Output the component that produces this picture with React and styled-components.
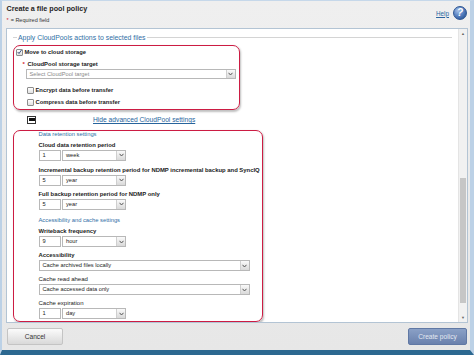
import styled, { createGlobalStyle } from "styled-components";

const GlobalStyle = createGlobalStyle`
  html, body { margin: 0; padding: 0; }
  body { font-family: "Liberation Sans", Arial, sans-serif; background: #fff; }
  * { box-sizing: border-box; }
`;

const Dialog = styled.div`
  width: 474px;
  height: 355px;
  display: flex;
  flex-direction: column;
  background: linear-gradient(#efefef, #e7e7e7);
  border-top: 1px solid #c6d8ea;
  border-left: 2px solid #bcd1e6;
  border-right: 4px solid #bcd1e6;
  border-bottom: 5px solid #2c6890;
  overflow: hidden;
  color: #222;
`;

const Header = styled.div`
  display: flex;
  justify-content: space-between;
  height: 27px;
  padding: 3px 3px 0 4.5px;
`;

const Title = styled.div`
  font-size: 7.2px;
  font-weight: bold;
  line-height: 9px;
  color: #1e1e1e;
`;

const Required = styled.div`
  font-size: 5.5px;
  line-height: 7px;
  margin-top: 4px;
  color: #333;
`;

const Star = styled.span`
  color: #d2232a;
  margin-right: ${(p) => p.gap || "1px"};
`;

const HelpArea = styled.div`
  display: flex;
  align-items: center;
  gap: 4px;
  height: 14px;
  margin-top: 2px;
`;

const HelpLink = styled.a`
  font-size: 6.3px;
  color: #2a64a0;
  text-decoration: underline;
`;

const HelpIcon = styled.div`
  width: 14px;
  height: 14px;
  border-radius: 50%;
  border: 1px solid #2d5592;
  background: radial-gradient(circle at 35% 30%, #a8c2e8, #5a83c2 45%, #2f5a9c 80%);
  color: #fff;
  font-size: 10px;
  font-weight: bold;
  font-style: italic;
  line-height: 12px;
  text-align: center;
`;

const Panel = styled.div`
  margin: 0 2px 0 4px;
  height: 295px;
  display: flex;
  background: #fff;
  border: 1px solid #b3c4d4;
`;

const Content = styled.div`
  flex: 1;
  overflow: hidden;
  padding: 0 6px;
`;

const ScrollBar = styled.div`
  width: 9px;
  display: flex;
  flex-direction: column;
  background: #f1f1f1;
  border-left: 1px solid #e4e4e4;
`;

const ScrollArrow = styled.div`
  height: 9px;
  display: flex;
  align-items: center;
  justify-content: center;
  font-size: 4px;
  color: #666;
`;

const ScrollTrack = styled.div`
  flex: 1;
  padding: 0 1px;
`;

const Thumb = styled.div`
  margin-top: 140px;
  height: 125px;
  background: #c6c6c6;
`;

const LegendRow = styled.div`
  display: flex;
  align-items: center;
  height: 9px;
  margin-top: 3.5px;
`;

const Rule = styled.div`
  height: 1px;
  background: #d4d4d4;
  width: ${(p) => p.w || "auto"};
  flex: ${(p) => (p.w ? "none" : 1)};
`;

const Legend = styled.span`
  font-size: 6.9px;
  color: #2f6ea5;
  padding: 0 1px;
  white-space: nowrap;
`;

const RedBox = styled.div`
  width: ${(p) => p.w}px;
  height: ${(p) => p.h}px;
  margin-top: ${(p) => p.mt}px;
  padding-left: ${(p) => p.pl || 0}px;
  border: 1.6px solid #cc1c43;
  border-radius: 7px;
  box-shadow: 1px 1.5px 2px rgba(0, 0, 0, 0.25);
`;

const CheckRow = styled.div`
  display: flex;
  align-items: center;
  gap: 2px;
  height: 9px;
  margin: ${(p) => p.m};
  font-size: 5.8px;
  font-weight: bold;
`;

const Box = styled.div`
  width: 7px;
  height: 7px;
  border: 1px solid #8d8d8d;
  border-radius: 1px;
  background: linear-gradient(#ffffff, #e0e0e0);
  display: flex;
  align-items: center;
  justify-content: center;
`;

const FieldLabel = styled.div`
  height: 8px;
  line-height: 8px;
  font-size: ${(p) => (p.light ? "6px" : "5.9px")};
  font-weight: ${(p) => (p.light ? "normal" : "bold")};
  margin: ${(p) => p.m || "0 0 1px 0"};
  white-space: nowrap;
`;

const SelectBox = styled.div`
  width: ${(p) => p.w}px;
  height: ${(p) => p.h || 11}px;
  margin: ${(p) => p.m || 0};
  display: flex;
  border: 1px solid #b8b8b8;
  background: #fff;
`;

const SelectText = styled.div`
  flex: 1;
  padding-left: 3px;
  font-size: 5.7px;
  line-height: 9px;
  color: ${(p) => (p.muted ? "#8a8a8a" : "#222")};
  white-space: nowrap;
  overflow: hidden;
`;

const SelectArrow = styled.div`
  width: 9px;
  display: flex;
  align-items: center;
  justify-content: center;
  border-left: 1px solid #cfcfcf;
  background: linear-gradient(#fafafa, #d9d9d9);
`;

const NumInput = styled.div`
  width: 22px;
  height: 11px;
  border: 1px solid #b8b8b8;
  padding-left: 3px;
  font-size: 5.7px;
  line-height: 9px;
`;

const ToggleRow = styled.div`
  display: flex;
  align-items: center;
  height: 11px;
  margin-top: 4px;
  padding-left: 14px;
`;

const MinusBox = styled.div`
  width: 9px;
  height: 8px;
  border: 1px solid #333;
  background: #fff;
  display: flex;
  align-items: center;
  justify-content: center;
`;

const MinusBar = styled.div`
  width: 6px;
  height: 3px;
  background: #111;
`;

const Link = styled.a`
  margin-left: 57px;
  font-size: 6.7px;
  color: #27649c;
  text-decoration: underline;
`;

const SubHead = styled.div`
  height: 7px;
  line-height: 7px;
  font-size: 5.8px;
  color: #2f6ea5;
  margin-top: ${(p) => p.mt || 0}px;
`;

const Field = styled.div`
  margin-top: ${(p) => p.mt}px;
`;

const InputRow = styled.div`
  display: flex;
  gap: 1.5px;
`;

const Footer = styled.div`
  display: flex;
  justify-content: space-between;
  padding: 4.5px 3px 0 5px;
`;

const Button = styled.div`
  width: ${(p) => p.w}px;
  height: 17.5px;
  display: flex;
  align-items: center;
  justify-content: center;
  font-size: 6.6px;
  border-radius: 2px;
  border: 1px solid ${(p) => (p.primary ? "#6078a4" : "#c4c4c4")};
  color: ${(p) => (p.primary ? "#e4e9f2" : "#333")};
  background: ${(p) =>
    p.primary
      ? "linear-gradient(#8aa0c6, #6a81ad)"
      : "linear-gradient(#fbfbfb, #d9d9d9)"};
`;

const Chevron = () => (
  <svg width="5" height="4" viewBox="0 0 5 4">
    <path d="M0.5 0.8 L2.5 3 L4.5 0.8" fill="none" stroke="#555" strokeWidth="1" />
  </svg>
);

const Check = () => (
  <svg width="6" height="6" viewBox="0 0 6 6">
    <path d="M0.8 3 L2.4 4.8 L5.4 0.6" fill="none" stroke="#3a4f7a" strokeWidth="1.2" />
  </svg>
);

const Select = ({ w, value, muted, m, h }) => (
  <SelectBox w={w} m={m} h={h}>
    <SelectText muted={muted}>{value}</SelectText>
    <SelectArrow>
      <Chevron />
    </SelectArrow>
  </SelectBox>
);

const PeriodField = ({ label, num, unit, mt, light }) => (
  <Field mt={mt}>
    <FieldLabel light={light}>{label}</FieldLabel>
    <InputRow>
      <NumInput>{num}</NumInput>
      <Select w={64} value={unit} />
    </InputRow>
  </Field>
);

const WideField = ({ label, value, mt, light }) => (
  <Field mt={mt}>
    <FieldLabel light={light}>{label}</FieldLabel>
    <Select w={211} value={value} />
  </Field>
);

export default function App() {
  return (
    <>
      <GlobalStyle />
      <Dialog>
        <Header>
          <div>
            <Title>Create a file pool policy</Title>
            <Required>
              <Star gap="2px">*</Star>= Required field
            </Required>
          </div>
          <HelpArea>
            <HelpLink>Help</HelpLink>
            <HelpIcon>?</HelpIcon>
          </HelpArea>
        </Header>

        <Panel>
          <Content>
            <LegendRow>
              <Rule w="4px" />
              <Legend>Apply CloudPools actions to selected files</Legend>
              <Rule />
            </LegendRow>

            <RedBox w={227} h={65} mt={3.5}>
              <CheckRow m="1.5px 0 0 1.5px">
                <Box>
                  <Check />
                </Box>
                Move to cloud storage
              </CheckRow>
              <FieldLabel m="3.5px 0 0 8.5px">
                <Star>*</Star> CloudPool storage target
              </FieldLabel>
              <Select w={210} h={10.5} m="0.5px 0 0 11.5px" value="Select CloudPool target" muted />
              <CheckRow m="6.5px 0 0 12.5px">
                <Box />
                Encrypt data before transfer
              </CheckRow>
              <CheckRow m="3px 0 0 12.5px">
                <Box />
                Compress data before transfer
              </CheckRow>
            </RedBox>

            <ToggleRow>
              <MinusBox>
                <MinusBar />
              </MinusBox>
              <Link>Hide advanced CloudPool settings</Link>
            </ToggleRow>

            <RedBox w={249.5} h={192} mt={4.5} pl={24.5}>
              <SubHead>Data retention settings</SubHead>
              <PeriodField mt={3} label="Cloud data retention period" num="1" unit="week" />
              <PeriodField
                mt={5}
                label="Incremental backup retention period for NDMP incremental backup and SyncIQ"
                num="5"
                unit="year"
              />
              <PeriodField mt={4} label="Full backup retention period for NDMP only" num="5" unit="year" />
              <SubHead mt={7}>Accessibility and cache settings</SubHead>
              <PeriodField mt={3.5} label="Writeback frequency" num="9" unit="hour" />
              <WideField mt={4} label="Accessibility" value="Cache archived files locally" />
              <WideField mt={4} light label="Cache read ahead" value="Cache accessed data only" />
              <PeriodField mt={4} light label="Cache expiration" num="1" unit="day" />
            </RedBox>
          </Content>
          <ScrollBar>
            <ScrollArrow>▲</ScrollArrow>
            <ScrollTrack>
              <Thumb />
            </ScrollTrack>
            <ScrollArrow>▼</ScrollArrow>
          </ScrollBar>
        </Panel>

        <Footer>
          <Button w={56}>Cancel</Button>
          <Button w={59} primary>
            Create policy
          </Button>
        </Footer>
      </Dialog>
    </>
  );
}
